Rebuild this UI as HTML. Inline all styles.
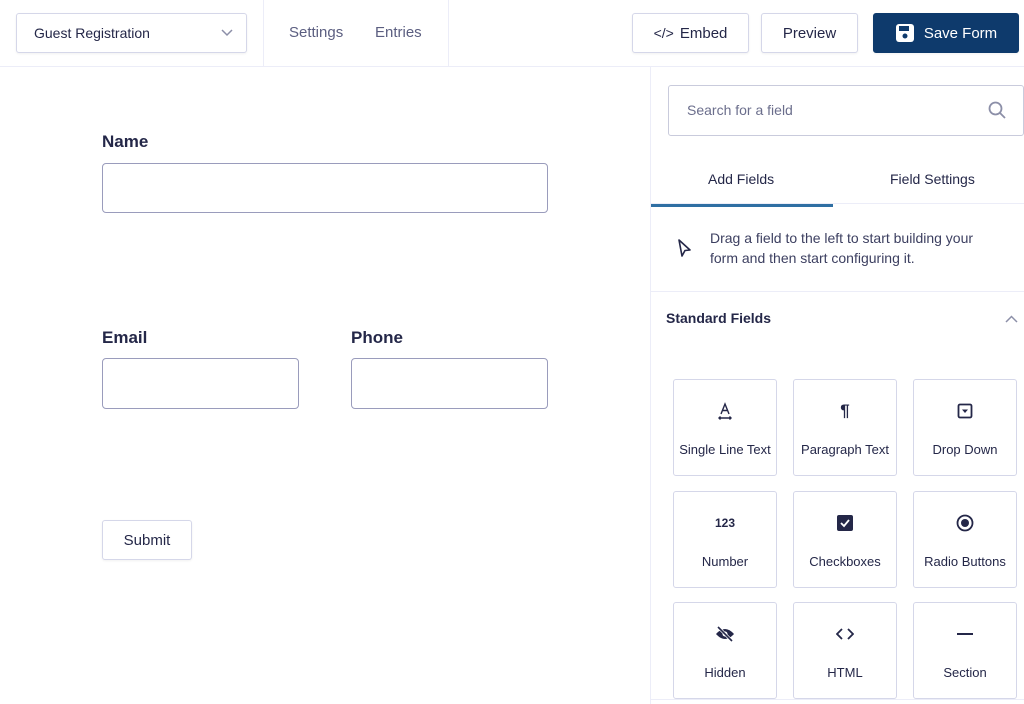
<!DOCTYPE html>
<html><head><style>
*{box-sizing:border-box;margin:0;padding:0}
body{width:1024px;height:704px;overflow:hidden;background:#fff;font-family:"Liberation Sans",sans-serif;color:#242748;position:relative}
.abs{position:absolute}
.btn{position:absolute;border:1px solid #d5d7e9;border-radius:3px;background:#fff;font-size:15px;display:flex;align-items:center;justify-content:center;color:#242748;box-shadow:0 1px 2px rgba(0,0,0,.06)}
.lbl{position:absolute;font-size:17px;font-weight:bold;color:#242748}
.inp{position:absolute;border:1px solid #9a9cbc;border-radius:4px;background:#fff}
.cell{position:absolute;width:104px;height:97px;border:1px solid #d5d7e9;border-radius:3px;font-size:13px;color:#242748;text-align:center}
.cell .ic{position:absolute;top:22px;left:0;right:0;height:18px;display:flex;justify-content:center;align-items:center}
.cell .t{position:absolute;top:62px;left:0;right:0}
</style></head><body>
<div class="abs" style="left:0;top:66px;width:1024px;height:1px;background:#ecedf8"></div>
<div class="abs" style="left:263px;top:0;width:1px;height:66px;background:#ecedf8"></div>
<div class="abs" style="left:448px;top:0;width:1px;height:66px;background:#ecedf8"></div>
<div class="btn" style="left:16px;top:13px;width:231px;height:40px;justify-content:flex-start;padding-left:17px;font-size:14px">Guest Registration
<svg class="abs" style="left:204px;top:15px" width="12" height="8" viewBox="0 0 12 8"><path d="M1 1l5 5 5-5" stroke="#8c8fa8" stroke-width="1.5" fill="none"/></svg></div>
<div class="abs" style="left:289px;top:24px;font-size:15px;color:#5b5e80">Settings</div>
<div class="abs" style="left:375px;top:24px;font-size:15px;color:#5b5e80">Entries</div>
<div class="btn" style="left:632px;top:13px;width:117px;height:40px"><span style="font-size:14px;margin-right:6px">&lt;/&gt;</span>Embed</div>
<div class="btn" style="left:761px;top:13px;width:97px;height:40px">Preview</div>
<div class="btn" style="left:873px;top:13px;width:146px;height:40px;background:#0e3a6c;border-color:#0e3a6c;color:#fff">
<svg width="20" height="20" viewBox="0 0 20 20" style="margin-right:9px"><rect x="1" y="1" width="18" height="18" rx="3" fill="#fff"/><rect x="4" y="3" width="10" height="5" fill="#0e3a6c"/><circle cx="10" cy="13" r="2.5" fill="#0e3a6c"/></svg>Save Form</div>

<div class="lbl" style="left:102px;top:132px">Name</div>
<div class="inp" style="left:102px;top:163px;width:446px;height:50px"></div>
<div class="lbl" style="left:102px;top:328px">Email</div>
<div class="inp" style="left:102px;top:358px;width:197px;height:51px"></div>
<div class="lbl" style="left:351px;top:328px">Phone</div>
<div class="inp" style="left:351px;top:358px;width:197px;height:51px"></div>
<div class="btn" style="left:102px;top:520px;width:90px;height:40px">Submit</div>

<div class="abs" style="left:650px;top:67px;width:1px;height:637px;background:#ecedf8"></div>
<div class="abs" style="left:668px;top:85px;width:356px;height:51px;border:1px solid #c9cbdc;border-radius:3px;font-size:14px;color:#6b6e8c;padding:16px 0 0 18px">Search for a field
<svg class="abs" style="left:319px;top:15px" width="18" height="18" viewBox="0 0 18 18"><circle cx="7.5" cy="7.5" r="6" stroke="#8c8fa8" stroke-width="1.8" fill="none"/><path d="M12 12l5 5" stroke="#8c8fa8" stroke-width="1.8"/></svg></div>
<div class="abs" style="left:708px;top:171px;font-size:14px">Add Fields</div>
<div class="abs" style="left:890px;top:171px;font-size:14px">Field Settings</div>
<div class="abs" style="left:651px;top:203px;width:373px;height:1px;background:#ecedf8"></div>
<div class="abs" style="left:651px;top:204px;width:182px;height:3px;background:#2f6fa3"></div>
<svg class="abs" style="left:677px;top:238px" width="16" height="20" viewBox="0 0 16 20"><path d="M2 2l11 10-5 .5-3 5.5z" stroke="#242748" stroke-width="1.6" fill="none" stroke-linejoin="round"/></svg>
<div class="abs" style="left:710px;top:228px;width:288px;font-size:14px;line-height:20px;color:#3c3f60">Drag a field to the left to start building your form and then start configuring it.</div>
<div class="abs" style="left:651px;top:291px;width:373px;height:1px;background:#ecedf8"></div>
<div class="abs" style="left:666px;top:310px;font-size:14px;font-weight:bold">Standard Fields</div>
<svg class="abs" style="left:1005px;top:315px" width="13" height="8" viewBox="0 0 13 8"><path d="M1 7l5.5-5.5L12 7" stroke="#8c8fa8" stroke-width="1.5" fill="none"/></svg>

<div class="cell" style="left:673px;top:379px"><div class="ic"><svg width="16" height="18" viewBox="0 0 16 18"><path d="M4 12L8 2l4 10M5.5 8.5h5M2 16h12M3.5 14.5L2 16l1.5 1.5M12.5 14.5L14 16l-1.5 1.5" stroke="#242748" stroke-width="1.4" fill="none"/></svg></div><div class="t">Single Line Text</div></div>
<div class="cell" style="left:793px;top:379px"><div class="ic" style="font-weight:bold;font-size:17px">¶</div><div class="t">Paragraph Text</div></div>
<div class="cell" style="left:913px;top:379px"><div class="ic"><svg width="16" height="16" viewBox="0 0 16 16"><rect x="1.5" y="1.5" width="13" height="13" rx="1.5" stroke="#242748" stroke-width="1.8" fill="none"/><path d="M5 6.5h6L8 10z" fill="#242748"/></svg></div><div class="t">Drop Down</div></div>
<div class="cell" style="left:673px;top:491px"><div class="ic" style="font-size:12px;font-weight:bold">123</div><div class="t">Number</div></div>
<div class="cell" style="left:793px;top:491px"><div class="ic"><svg width="18" height="18" viewBox="0 0 18 18"><rect x="1" y="1" width="16" height="16" rx="2" fill="#242748"/><path d="M5 9l3 3 5-6" stroke="#fff" stroke-width="1.8" fill="none"/></svg></div><div class="t">Checkboxes</div></div>
<div class="cell" style="left:913px;top:491px"><div class="ic"><svg width="18" height="18" viewBox="0 0 18 18"><circle cx="9" cy="9" r="7.5" stroke="#242748" stroke-width="1.8" fill="none"/><circle cx="9" cy="9" r="4" fill="#242748"/></svg></div><div class="t">Radio Buttons</div></div>
<div class="cell" style="left:673px;top:602px"><div class="ic"><svg width="20" height="16" viewBox="0 0 20 16"><path d="M1 8q9-10 18 0-9 10-18 0z" fill="#242748"/><circle cx="10" cy="8" r="2.5" fill="#fff"/><path d="M3 1l14 14" stroke="#fff" stroke-width="3"/><path d="M3 1l14 14" stroke="#242748" stroke-width="1.6"/></svg></div><div class="t">Hidden</div></div>
<div class="cell" style="left:793px;top:602px"><div class="ic"><svg width="18" height="12" viewBox="0 0 18 12"><path d="M6 1L1 6l5 5M12 1l5 5-5 5" stroke="#242748" stroke-width="1.8" fill="none"/></svg></div><div class="t">HTML</div></div>
<div class="cell" style="left:913px;top:602px"><div class="ic"><div style="width:16px;height:2px;background:#242748"></div></div><div class="t">Section</div></div>
<div class="abs" style="left:651px;top:699px;width:373px;height:5px;background:#fff;border-top:1px solid #ecedf8"></div>
</body></html>
